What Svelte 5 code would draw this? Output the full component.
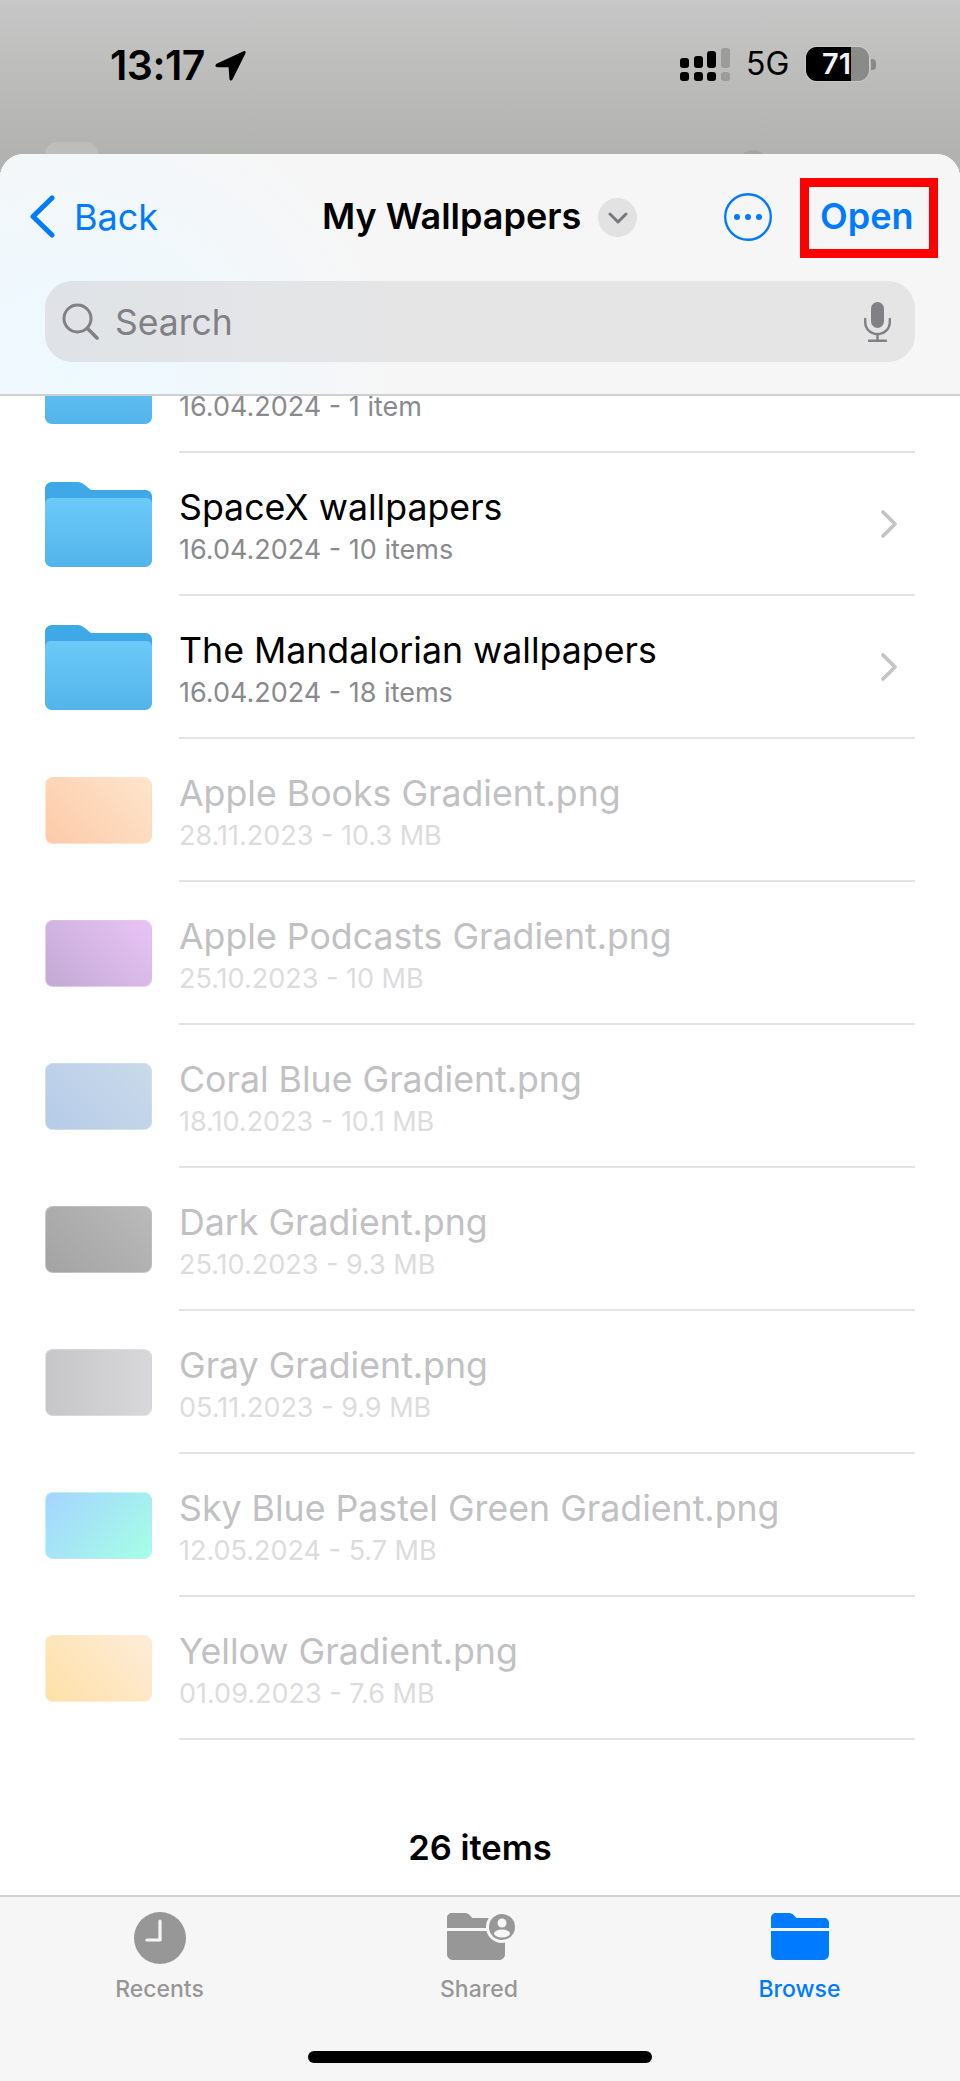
<script>
  const rows = [
    { title: '', sub: '16.04.2024 - 1 item', folder: true },
    { title: 'SpaceX wallpapers', sub: '16.04.2024 - 10 items', folder: true },
    { title: 'The Mandalorian wallpapers', sub: '16.04.2024 - 18 items', folder: true },
    { title: 'Apple Books Gradient.png', sub: '28.11.2023 - 10.3 MB', thumb: 'books' },
    { title: 'Apple Podcasts Gradient.png', sub: '25.10.2023 - 10 MB', thumb: 'podcasts' },
    { title: 'Coral Blue Gradient.png', sub: '18.10.2023 - 10.1 MB', thumb: 'coral' },
    { title: 'Dark Gradient.png', sub: '25.10.2023 - 9.3 MB', thumb: 'dark' },
    { title: 'Gray Gradient.png', sub: '05.11.2023 - 9.9 MB', thumb: 'gray' },
    { title: 'Sky Blue Pastel Green Gradient.png', sub: '12.05.2024 - 5.7 MB', thumb: 'sky' },
    { title: 'Yellow Gradient.png', sub: '01.09.2023 - 7.6 MB', thumb: 'yellow' }
  ];
</script>

<div class="phone">
  <div class="status">
    <div class="ghost-a"></div>
    <div class="ghost-b"></div>
    <div class="time">
      <span>13:17</span>
      <svg class="loc" viewBox="0 0 31 31"><path d="M2 13.500 28.500 1.200c1.500-.6 2.600.6 2 2L17.600 29.200c-.9 1.800-2.800 1.600-3.200-.3L13.600 17.200H2.500C.3 17.200-.5 14.700 2 13.500Z" fill="#000"/></svg>
    </div>
    <div class="right">
      <svg class="signal" viewBox="0 0 50 33">
        <rect x="0" y="10" width="9" height="10" rx="3" fill="#000"/><rect x="0" y="24" width="9" height="9" rx="3" fill="#000"/>
        <rect x="14" y="8" width="9" height="12" rx="3" fill="#000"/><rect x="14" y="24" width="9" height="9" rx="3" fill="#000"/>
        <rect x="27" y="3" width="9" height="17" rx="3" fill="#000"/><rect x="27" y="24" width="9" height="9" rx="3" fill="#000"/>
        <rect x="41" y="0" width="9" height="20" rx="3" fill="#9c9d9b"/><rect x="41" y="24" width="9" height="9" rx="3" fill="#9c9d9b"/>
      </svg>
      <span class="net">5G</span>
      <div class="battery">
        <div class="level">71</div>
      </div>
      <div class="nub"></div>
    </div>
  </div>

  <div class="sheet">
    <header class="head">
      <div class="nav">
        <div class="back">
          <svg viewBox="0 0 26 43" class="backicon"><path d="M23 3 4 21.500 23 40" fill="none" stroke="#007aff" stroke-width="5" stroke-linecap="round" stroke-linejoin="round"/></svg>
          <span>Back</span>
        </div>
        <div class="title">
          <span>My Wallpapers</span>
          <div class="titlechev">
            <svg viewBox="0 0 20 12"><path d="M2 2l8 8 8-8" fill="none" stroke="#77777a" stroke-width="3" stroke-linecap="round" stroke-linejoin="round"/></svg>
          </div>
        </div>
        <svg class="more" viewBox="0 0 48 48">
          <circle cx="24" cy="24" r="22.800" fill="none" stroke="#007aff" stroke-width="2.400"/>
          <circle cx="13" cy="24" r="3" fill="#007aff"/><circle cx="24" cy="24" r="3" fill="#007aff"/><circle cx="35" cy="24" r="3" fill="#007aff"/>
        </svg>
        <div class="open">Open</div>
      </div>
      <div class="search">
        <svg class="mag" viewBox="0 0 37 37"><circle cx="15.500" cy="15.500" r="13.500" fill="none" stroke="#808085" stroke-width="3"/><path d="M25.500 25.500 35 35" stroke="#808085" stroke-width="3.600" stroke-linecap="round"/></svg>
        <span class="placeholder">Search</span>
        <svg class="mic" viewBox="0 0 27 40">
          <rect x="7" y="0" width="13" height="26" rx="6.500" fill="#808085"/>
          <path d="M1.200 17v3c0 7 5.500 12.200 12.300 12.200S25.800 27 25.800 20v-3" fill="none" stroke="#808085" stroke-width="2.400" stroke-linecap="round"/>
          <path d="M13.500 32v6M5 38.700h17" stroke="#808085" stroke-width="2.400" stroke-linecap="round"/>
        </svg>
      </div>
    </header>

    <div class="scroller">
      <div class="list">
        {#each rows as r}
          <div class="row" class:dim={!r.folder}>
            {#if r.folder}
              <svg class="folder" viewBox="0 0 107 85">
                <defs><linearGradient id="fg" x1="0" y1="0" x2="0" y2="1"><stop offset="0" stop-color="#6ccaf8"/><stop offset="1" stop-color="#52b4ea"/></linearGradient></defs>
                <path d="M0 40V7c0-4 3-7 7-7h25c3 0 5 .8 7 2.500L46 8h54c4 0 7 2.500 7 6.500V40Z" fill="#3ea9e6"/>
                <path d="M0 22c0-3.500 2.500-6 6-6h95c3.500 0 6 2.500 6 6v56c0 4-3 7-7 7H7c-4 0-7-3-7-7Z" fill="url(#fg)"/>
              </svg>
            {:else}
              <div class="thumb {r.thumb}"></div>
            {/if}
            <div class="body">
              <div class="text">
                <div class="name">{r.title}</div>
                <div class="sub">{r.sub}</div>
              </div>
              {#if r.folder}
                <svg class="chev" viewBox="0 0 19 30"><path d="M3 3l12 12L3 27" fill="none" stroke="#c4c4c7" stroke-width="3.800" stroke-linecap="round" stroke-linejoin="round"/></svg>
              {/if}
            </div>
          </div>
        {/each}
      </div>
      <div class="count">26 items</div>
    </div>

    <nav class="tabs">
      <div class="tab">
        <svg class="tabicon" viewBox="0 0 52 52"><circle cx="26" cy="26" r="26" fill="#979797"/><path d="M26 9v19H13" fill="none" stroke="#f6f6f6" stroke-width="3.200" stroke-linecap="round" stroke-linejoin="round"/></svg>
        <span>Recents</span>
      </div>
      <div class="tab">
        <svg class="tabicon wide" viewBox="0 0 69 52">
          <path d="M0 16V6c0-3 2-5 5-5h12c2.500 0 4 .5 5.500 2l3 3H53c3 0 5 2 5 5v5Z" fill="#979797"/>
          <path d="M0 19h58v23c0 3.500-2.500 6-6 6H6c-3.500 0-6-2.500-6-6Z" fill="#979797"/>
          <circle cx="55" cy="15" r="16" fill="#f6f6f6"/>
          <circle cx="55" cy="15" r="13" fill="#979797"/>
          <circle cx="55" cy="11" r="4.500" fill="#f6f6f6"/>
          <ellipse cx="55" cy="21.500" rx="8" ry="4" fill="#f6f6f6"/>
        </svg>
        <span>Shared</span>
      </div>
      <div class="tab active">
        <svg class="tabicon wide2" viewBox="0 0 58 52">
          <path d="M0 16V6c0-3 2-5 5-5h12c2.500 0 4 .5 5.500 2l3 3H53c3 0 5 2 5 5v5Z" fill="#007aff"/>
          <path d="M0 19h58v23c0 3.500-2.500 6-6 6H6c-3.500 0-6-2.500-6-6Z" fill="#007aff"/>
        </svg>
        <span>Browse</span>
      </div>
    </nav>
    <div class="homebar"></div>
  </div>

  <div class="redbox"></div>
</div>

<style>
  :global(body) { margin: 0; background: #fff; }
  .phone {
    position: relative;
    width: 960px;
    height: 2081px;
    overflow: hidden;
    display: flex;
    flex-direction: column;
    font-family: Inter, "Liberation Sans", sans-serif;
    background: linear-gradient(#c6c7c6, #b2b3b0 154px);
  }
  .status {
    position: relative;
    height: 154px;
    flex: none;
    display: flex;
    justify-content: space-between;
    align-items: flex-start;
    padding: 44px 84px 0 110px;
    box-sizing: border-box;
  }
  .ghost-a {
    position: absolute; left: 45px; top: 142px; width: 53px; height: 30px;
    border-radius: 12px; background: #bdbebb;
  }
  .ghost-b {
    position: absolute; left: 738px; top: 150px; width: 30px; height: 30px;
    border-radius: 50%; background: #a5a6a3;
  }
  .time {
    display: flex; align-items: center; gap: 10px;
    font-size: 41px; font-weight: 600; color: #000; line-height: 42px; letter-spacing: -0.5px;
  }
  .loc { width: 31px; height: 31px; }
  .right { display: flex; align-items: center; margin-top: 3px; }
  .signal { width: 50px; height: 33px; margin-right: 16px; }
  .net { font-size: 32px; font-weight: 400; color: #000; width: 60px; line-height: 34px; }
  .battery {
    width: 63px; height: 34px; border-radius: 11px; background: #8a8b89; overflow: hidden;
    box-shadow: 0 0 0 1px rgba(255, 255, 255, 0.2);
  }
  .level {
    width: 45px; height: 34px; background: #000; color: #f2f2f2;
    font-size: 29px; font-weight: 600; line-height: 34px; text-align: right; white-space: nowrap;
  }
  .nub { width: 5px; height: 11px; background: #8a8b89; border-radius: 0 4px 4px 0; margin-left: 2px; }

  .sheet {
    position: relative;
    flex: 1;
    display: flex;
    flex-direction: column;
    min-height: 0;
    background: #fff;
    border-radius: 24px 24px 0 0;
    overflow: hidden;
  }
  .head {
    flex: none;
    height: 242px;
    box-sizing: border-box;
    border-bottom: 2px solid #cfcfd1;
    background: radial-gradient(ellipse 320px 280px at 70px 220px, #eef9ff 0%, #eff8fd 35%, #f6f6f6 100%), #f6f6f6;
    padding: 24px 45px 0;
  }
  .nav { position: relative; height: 80px; display: flex; align-items: center; margin: 0 -45px; }
  .back { display: flex; align-items: center; color: #007aff; font-size: 36px; margin: -3px 0 0 29px; gap: 19px; }
  .backicon { width: 26px; height: 43px; }
  .title {
    position: absolute; left: 322px; top: 0; height: 78px;
    display: flex; align-items: center; gap: 17px;
    font-size: 36px; font-weight: 600; color: #000;
  }
  .title span { margin-top: -3px; }
  .titlechev {
    width: 39px; height: 39px; border-radius: 50%; background: #e2e2e3;
    display: flex; align-items: center; justify-content: center;
  }
  .titlechev svg { width: 20px; height: 12px; margin-top: 2px; }
  .more { position: absolute; left: 724px; top: 15px; width: 48px; height: 48px; }
  .open { position: absolute; left: 820px; top: -2px; line-height: 80px; font-size: 36px; font-weight: 600; color: #007aff; }

  .search {
    height: 81px; border-radius: 27px; margin-top: 23px;
    background: linear-gradient(90deg, #dfe3e7, #e5e5e6 40%);
    display: flex; align-items: center; padding: 0 24px 0 17px;
  }
  .mag { width: 37px; height: 37px; margin-right: 16px; }
  .placeholder { font-size: 35.500px; color: #808085; flex: 1; padding-top: 2px; }
  .mic { width: 27px; height: 40px; }

  .scroller { flex: 1; min-height: 0; overflow: hidden; }
  .list { margin-top: -86px; }
  .row { display: flex; height: 143px; padding: 0 45px; gap: 27px; align-items: center; }
  .folder { width: 107px; height: 85px; flex: none; }
  .thumb {
    width: 107px; height: 67px; border-radius: 8px; flex: none; box-sizing: border-box;
    border: 1px solid rgba(255, 255, 255, 0.25);
  }
  .books { background: linear-gradient(45deg, #fdcaa9, #fde5cb); }
  .podcasts { background: linear-gradient(45deg, #c3a9d4, #e8c4f6); }
  .coral { background: linear-gradient(45deg, #b6cbe8, #c9dae9); }
  .dark { background: linear-gradient(45deg, #a3a3a3, #bababa); }
  .gray { background: linear-gradient(90deg, #c6c6c8, #d8d8da); }
  .sky { background: linear-gradient(135deg, #a5d4ff, #a5ffe6); }
  .yellow { background: linear-gradient(45deg, #fee1a8, #fdecd8); }
  .body {
    flex: 1; height: 143px; box-sizing: border-box;
    border-bottom: 2px solid #e3e3e5;
    display: flex; align-items: center; justify-content: space-between;
    padding-right: 16px;
  }
  .text { display: flex; flex-direction: column; padding-top: 6px; }
  .name { font-size: 35.700px; line-height: 46px; min-height: 46px; color: #000; }
  .sub { font-size: 27px; line-height: 40px; color: #8a8a8e; }
  .dim .name { color: #c1c1c3; }
  .dim .sub { color: #dcdcde; }
  .chev { width: 19px; height: 30px; }
  .count {
    text-align: center; font-size: 34.500px; font-weight: 600; color: #000;
    margin-top: 88px; line-height: 40px;
  }

  .tabs {
    flex: none; height: 186px; box-sizing: border-box;
    border-top: 2px solid #d2d2d3;
    background: #f6f6f6;
    display: grid; grid-template-columns: 319px 320px 321px;
    padding-top: 15px;
  }
  .tab { display: flex; flex-direction: column; align-items: center; color: #979797; font-size: 23px; font-weight: 500; gap: 11px; }
  .tab.active { color: #007aff; }
  .tabicon { width: 52px; height: 52px; }
  .tabicon.wide { width: 69px; transform: translateX(2px); }
  .tabicon.wide2 { width: 58px; }
  .homebar {
    position: absolute; left: 308px; top: 1897px; width: 344px; height: 12px;
    border-radius: 6px; background: #000;
  }
  .redbox {
    position: absolute; z-index: 2; left: 800px; top: 178px; width: 138px; height: 80px;
    box-sizing: border-box; border: 9px solid #ff0000;
  }
</style>
